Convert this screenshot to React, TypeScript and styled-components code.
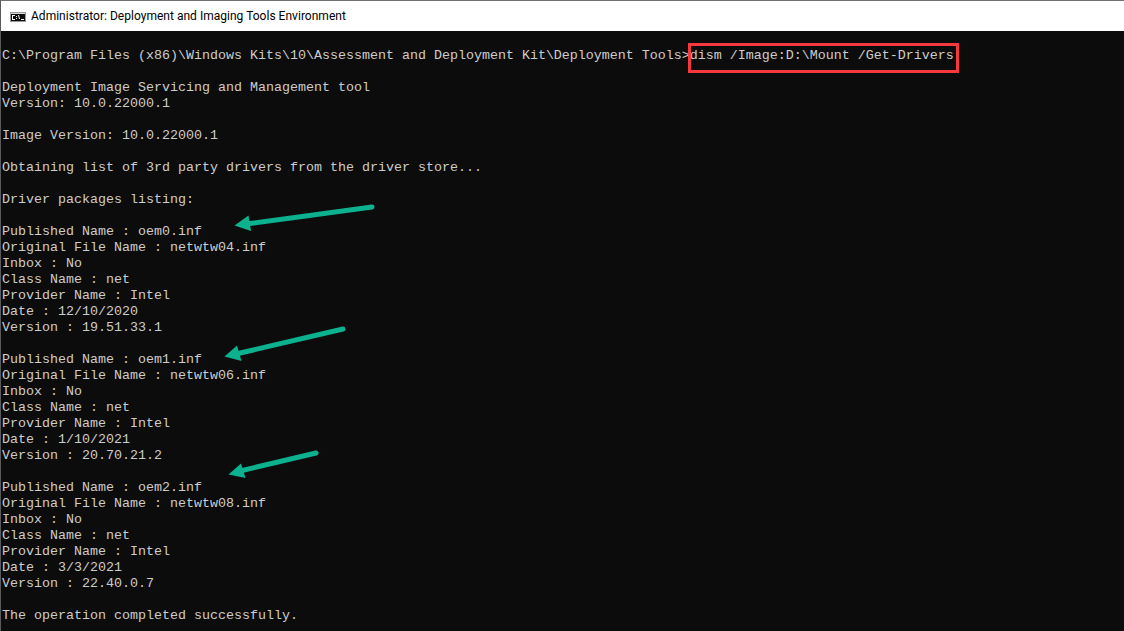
import React from "react";
import styled, { createGlobalStyle } from "styled-components";

const Global = createGlobalStyle`
  html, body { margin: 0; padding: 0; background: #0c0c0c; overflow: hidden; }
`;

const Win = styled.div`
  position: relative;
  width: 1124px;
  height: 631px;
  overflow: hidden;
  display: flex;
  flex-direction: column;
  box-sizing: border-box;
  border-top: 1px solid #6f6f6f;
  border-left: 1px solid #5a5a5a;
  background: #0c0c0c;
`;

const TitleBar = styled.div`
  height: 30px;
  flex: none;
  margin-left: -1px;
  padding-left: 10px;
  background: #fff;
  display: flex;
  align-items: center;
  gap: 5px;
  box-sizing: border-box;
  font: 12px Roboto, "Noto Sans", sans-serif;
  color: #000;
`;

const TitleText = styled.span`
  white-space: pre;
  letter-spacing: 0.02px;
`;

const Icon = styled.svg`
  flex: none;
  margin-top: 2px;
`;

const Console = styled.pre`
  margin: 0;
  flex: 1;
  padding: 17px 0 0 1px;
  background: #0c0c0c;
  color: #cccccc;
  font: 13.333px/16px "Liberation Mono", monospace;
  white-space: pre;
`;

const Highlight = styled.div`
  position: absolute;
  left: 687px;
  top: 42px;
  width: 271px;
  height: 30px;
  box-sizing: border-box;
  border: 3px solid #f7383e;
  pointer-events: none;
`;

const Overlay = styled.svg`
  position: absolute;
  left: -1px;
  top: -1px;
  pointer-events: none;
`;

const text = `C:\\Program Files (x86)\\Windows Kits\\10\\Assessment and Deployment Kit\\Deployment Tools>dism /Image:D:\\Mount /Get-Drivers

Deployment Image Servicing and Management tool
Version: 10.0.22000.1

Image Version: 10.0.22000.1

Obtaining list of 3rd party drivers from the driver store...

Driver packages listing:

Published Name : oem0.inf
Original File Name : netwtw04.inf
Inbox : No
Class Name : net
Provider Name : Intel
Date : 12/10/2020
Version : 19.51.33.1

Published Name : oem1.inf
Original File Name : netwtw06.inf
Inbox : No
Class Name : net
Provider Name : Intel
Date : 1/10/2021
Version : 20.70.21.2

Published Name : oem2.inf
Original File Name : netwtw08.inf
Inbox : No
Class Name : net
Provider Name : Intel
Date : 3/3/2021
Version : 22.40.0.7

The operation completed successfully.`;

const arrows = [
  { tail: [372, 207], neck: [246, 224], head: "234.500,225.500 248.500,215.500 251,231" },
  { tail: [343, 329], neck: [236, 354], head: "224.500,356.500 237,345.500 241.500,361" },
  { tail: [316, 453], neck: [240, 471], head: "228.500,474.500 241,463.500 245.500,478" },
];

const ConsoleIcon = () => (
  <Icon width="16" height="10" viewBox="0 0 16 10">
    <rect x="0" y="0" width="16" height="10" fill="#9a9a9a" />
    <rect x="1" y="1" width="14" height="8" fill="#0c0c0c" />
    <rect x="1" y="1" width="14" height="1" fill="#d8d8d8" />
    <path d="M2 3h3v1h-2v3h2v1h-3zM6 4h1v1h-1zM6 6h1v1h-1zM8 3h1l1 4h-1zM11 7h3v1h-3z" fill="#f4f4f4" />
  </Icon>
);

export default function App() {
  return (
    <>
      <Global />
      <Win>
        <TitleBar>
          <ConsoleIcon />
          <TitleText>Administrator: Deployment and Imaging Tools Environment</TitleText>
        </TitleBar>
        <Console>{text}</Console>
        <Highlight />
        <Overlay width="1124" height="631" viewBox="0 0 1124 631">
          {arrows.map((a, i) => (
            <g key={i}>
              <line x1={a.tail[0]} y1={a.tail[1]} x2={a.neck[0]} y2={a.neck[1]} stroke="#0cb18f" strokeWidth="5" strokeLinecap="round" />
              <polygon points={a.head} fill="#0cb18f" />
            </g>
          ))}
        </Overlay>
      </Win>
    </>
  );
}
